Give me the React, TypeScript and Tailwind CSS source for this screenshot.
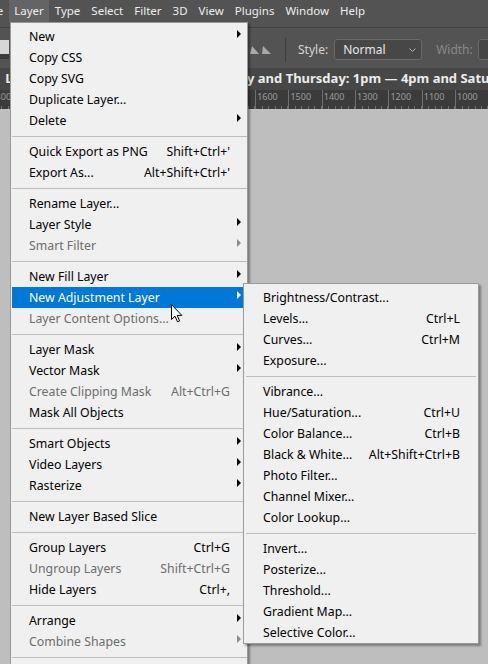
import clsx from 'clsx';

type Entry =
  | { sep: true }
  | { label: string; shortcut?: string; sub?: boolean; off?: boolean; on?: boolean };

const SEP: Entry = { sep: true };

const LAYER_MENU: Entry[] = [
  { label: 'New', sub: true },
  { label: 'Copy CSS' },
  { label: 'Copy SVG' },
  { label: 'Duplicate Layer...' },
  { label: 'Delete', sub: true },
  SEP,
  { label: 'Quick Export as PNG', shortcut: "Shift+Ctrl+'" },
  { label: 'Export As...', shortcut: "Alt+Shift+Ctrl+'" },
  SEP,
  { label: 'Rename Layer...' },
  { label: 'Layer Style', sub: true },
  { label: 'Smart Filter', sub: true, off: true },
  SEP,
  { label: 'New Fill Layer', sub: true },
  { label: 'New Adjustment Layer', sub: true, on: true },
  { label: 'Layer Content Options...', off: true },
  SEP,
  { label: 'Layer Mask', sub: true },
  { label: 'Vector Mask', sub: true },
  { label: 'Create Clipping Mask', shortcut: 'Alt+Ctrl+G', off: true },
  { label: 'Mask All Objects' },
  SEP,
  { label: 'Smart Objects', sub: true },
  { label: 'Video Layers', sub: true },
  { label: 'Rasterize', sub: true },
  SEP,
  { label: 'New Layer Based Slice' },
  SEP,
  { label: 'Group Layers', shortcut: 'Ctrl+G' },
  { label: 'Ungroup Layers', shortcut: 'Shift+Ctrl+G', off: true },
  { label: 'Hide Layers', shortcut: 'Ctrl+,' },
  SEP,
  { label: 'Arrange', sub: true },
  { label: 'Combine Shapes', sub: true, off: true },
  SEP,
  { label: 'Align Layers To Selection', sub: true },
  { label: 'Distribute', sub: true },
];

const ADJ_MENU: Entry[] = [
  { label: 'Brightness/Contrast...' },
  { label: 'Levels...', shortcut: 'Ctrl+L' },
  { label: 'Curves...', shortcut: 'Ctrl+M' },
  { label: 'Exposure...' },
  SEP,
  { label: 'Vibrance...' },
  { label: 'Hue/Saturation...', shortcut: 'Ctrl+U' },
  { label: 'Color Balance...', shortcut: 'Ctrl+B' },
  { label: 'Black & White...', shortcut: 'Alt+Shift+Ctrl+B' },
  { label: 'Photo Filter...' },
  { label: 'Channel Mixer...' },
  { label: 'Color Lookup...' },
  SEP,
  { label: 'Invert...' },
  { label: 'Posterize...' },
  { label: 'Threshold...' },
  { label: 'Gradient Map...' },
  { label: 'Selective Color...' },
];

const TOP = ['Image', 'Layer', 'Type', 'Select', 'Filter', '3D', 'View', 'Plugins', 'Window', 'Help'];

const RULER = [2400, 2300, 2200, 2100, 2000, 1900, 1800, 1700, 1600, 1500, 1400, 1300, 1200, 1100, 1000, 900];

function Arrow({ color }: { color: string }) {
  return (
    <svg width="4" height="8" viewBox="0 0 4 8" className="mt-[3px]">
      <polygon points="0,0 4,4 0,8" fill={color} />
    </svg>
  );
}

function MainRow({ e }: { e: Exclude<Entry, { sep: true }> }) {
  return (
    <div
      className={clsx(
        'mx-[1px] flex h-[21px] items-center pl-[17px] pt-[1px]',
        e.on ? 'bg-[#0078d7] text-white' : e.off ? 'text-[#6d6d6d]' : 'text-black',
      )}
    >
      <span className="flex-1 whitespace-nowrap">{e.label}</span>
      {e.shortcut && <span className="whitespace-nowrap">{e.shortcut}</span>}
      <span className="flex h-full w-[16px] items-start justify-end pr-[5px]">
        {e.sub && <Arrow color={e.on ? '#ffffff' : e.off ? '#8a8a8a' : '#000000'} />}
      </span>
    </div>
  );
}

function SubRow({ e }: { e: Exclude<Entry, { sep: true }> }) {
  return (
    <div className="flex h-[21px] items-center pl-[19px] pr-[18px] pt-[1px] text-black">
      <span className="flex-1 whitespace-nowrap">{e.label}</span>
      {e.shortcut && <span className="whitespace-nowrap">{e.shortcut}</span>}
    </div>
  );
}

export default function App() {
  return (
    <div className="relative h-[664px] w-[488px] overflow-hidden bg-[#bebebe] font-['Noto_Sans',sans-serif] text-[12px]">
      {/* menu bar */}
      <div className="flex h-[27px] items-start overflow-hidden bg-[#535353] text-[11.5px] text-[#eeeeee]">
        <div className="-ml-[37px] flex shrink-0">
          {TOP.map(t => (
            <span
              key={t}
              className={clsx('flex h-[22px] items-center px-[5.5px]', t === 'Layer' && 'bg-[#646464]')}
            >
              {t}
            </span>
          ))}
        </div>
      </div>

      {/* options bar */}
      <div className="flex h-[41px] items-center overflow-hidden border-t border-[#404040] bg-[#535353] pt-[3px]">
        <div className="flex w-[9px] shrink-0 flex-col">
          <div className="h-[14px] bg-[#d6d6d6]" />
          <div className="h-[5px] bg-[#3b3b3b]" />
        </div>
        <svg width="22" height="9" viewBox="0 0 22 9" className="ml-[241px] shrink-0">
          <polygon points="0,9 2,1 9,9" fill="#a9a9a9" />
          <polygon points="12,9 13,1 21,9" fill="#a9a9a9" />
        </svg>
        <div className="ml-[13px] h-[24px] w-px shrink-0 bg-[#3c3c3c]" />
        <span className="ml-[12px] shrink-0 text-[#d4d4d4]">Style:</span>
        <div className="ml-[6px] flex h-[21px] w-[88px] shrink-0 items-center justify-between rounded-[3px] border border-[#6a6a6a] bg-[#474747] pl-[8px] pr-[5px] text-[#e8e8e8]">
          <span>Normal</span>
          <svg width="7" height="4" viewBox="0 0 7 4">
            <polyline points="0.5,0.5 3.5,3.5 6.5,0.5" fill="none" stroke="#b5b5b5" strokeWidth="1" />
          </svg>
        </div>
        <span className="ml-[14px] shrink-0 text-[#8a8a8a]">Width:</span>
        <div className="ml-[5px] h-[21px] w-[40px] shrink-0 rounded-[3px] border border-[#6a6a6a] bg-[#454545]" />
      </div>

      {/* document tab */}
      <div className="flex h-[22px] items-center overflow-hidden bg-[#474747] text-[13px] font-bold text-[#ececec]">
        <span className="flex w-[247px] shrink-0 justify-end overflow-hidden whitespace-nowrap">
          Library Office Hours: Monday, Tuesda
        </span>
        <span className="shrink-0 whitespace-nowrap">y and Thursday: 1pm — 4pm and Saturday 10am — 2pm</span>
      </div>

      {/* ruler */}
      <div className="flex h-[19px] overflow-hidden bg-[#3b3b3b] text-[9px] text-[#9c9c9c]">
        <div className="-ml-[11.5px] flex shrink-0">
          {RULER.map(n => (
            <div key={n} className="flex w-[33.33px] shrink-0 flex-col border-l border-[#6f6f6f]">
              <span className="flex-1 pl-[1px] leading-[13px]">{n}</span>
              <div className="flex h-[3px]">
                {[0, 1, 2, 3, 4].map(i => (
                  <div key={i} className="h-full flex-1 border-r border-[#6f6f6f]" />
                ))}
              </div>
            </div>
          ))}
        </div>
      </div>

      {/* Layer menu */}
      <div className="absolute left-[10px] top-[22px] w-[238px] border border-[#999999] bg-[#f0f0f0] pt-[3px] text-[12.3px] shadow-[2px_2px_2px_rgba(0,0,0,0.35)]">
        {LAYER_MENU.map((e, i) =>
          'sep' in e ? (
            <div key={i} className="flex h-[10px] items-center pl-[1px]">
              <div className="h-px w-full bg-[#bdbdbd]" />
            </div>
          ) : (
            <MainRow key={i} e={e} />
          ),
        )}
      </div>

      {/* New Adjustment Layer submenu */}
      <div className="absolute left-[243px] top-[283px] w-[236px] border border-[#999999] bg-[#f0f0f0] pt-[3px] text-[12.3px] shadow-[2px_2px_2px_rgba(0,0,0,0.35)]">
        {ADJ_MENU.map((e, i) =>
          'sep' in e ? (
            <div key={i} className="flex h-[10px] items-center px-[2px]">
              <div className="h-px w-full bg-[#bdbdbd]" />
            </div>
          ) : (
            <SubRow key={i} e={e} />
          ),
        )}
      </div>

      {/* mouse pointer */}
      <svg width="12" height="19" viewBox="0 0 12 19" className="absolute left-[171px] top-[304px]">
        <path d="M0.5 0.5 L0.5 15.5 L4 12.2 L6.5 17.8 L8.6 16.9 L6.2 11.4 L10.8 11.4 Z" fill="#ffffff" stroke="#000000" strokeWidth="1" strokeLinejoin="miter" />
      </svg>
    </div>
  );
}
